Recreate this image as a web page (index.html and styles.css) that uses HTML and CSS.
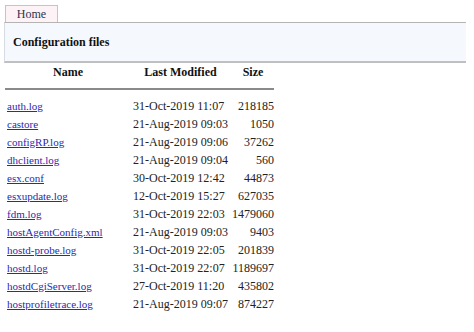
FILE: index.html
```html
<!DOCTYPE html>
<html lang="en">
<head>
  <meta charset="UTF-8" />
  <title>Configuration files</title>
  <link rel="stylesheet" href="styles.css">
</head>
<body>
  <div id="tabs">
    <span class="tab">Home</span>
  </div>
  <div id="title-box">Configuration files</div>

  <table id="listing">
    <tr>
      <th class="col-name">Name</th>
      <th class="col-date">Last Modified</th>
      <th class="col-size">Size</th>
    </tr>
    <tr><td colspan="3" class="rule-cell"><div class="rule"></div></td></tr>
    <tr><td><a href="#">auth.log</a></td><td class="date">31-Oct-2019 11:07</td><td class="size">218185</td></tr>
    <tr><td><a href="#">castore</a></td><td class="date">21-Aug-2019 09:03</td><td class="size">1050</td></tr>
    <tr><td><a href="#">configRP.log</a></td><td class="date">21-Aug-2019 09:06</td><td class="size">37262</td></tr>
    <tr><td><a href="#">dhclient.log</a></td><td class="date">21-Aug-2019 09:04</td><td class="size">560</td></tr>
    <tr><td><a href="#">esx.conf</a></td><td class="date">30-Oct-2019 12:42</td><td class="size">44873</td></tr>
    <tr><td><a href="#">esxupdate.log</a></td><td class="date">12-Oct-2019 15:27</td><td class="size">627035</td></tr>
    <tr><td><a href="#">fdm.log</a></td><td class="date">31-Oct-2019 22:03</td><td class="size">1479060</td></tr>
    <tr><td><a href="#">hostAgentConfig.xml</a></td><td class="date">21-Aug-2019 09:03</td><td class="size">9403</td></tr>
    <tr><td><a href="#">hostd-probe.log</a></td><td class="date">31-Oct-2019 22:05</td><td class="size">201839</td></tr>
    <tr><td><a href="#">hostd.log</a></td><td class="date">31-Oct-2019 22:07</td><td class="size">1189697</td></tr>
    <tr><td><a href="#">hostdCgiServer.log</a></td><td class="date">27-Oct-2019 11:20</td><td class="size">435802</td></tr>
    <tr><td><a href="#">hostprofiletrace.log</a></td><td class="date">21-Aug-2019 09:07</td><td class="size">874227</td></tr>
  </table>
</body>
</html>
```

FILE: styles.css
```css
body {
  margin: 0;
  padding: 5px 8px 0 4px;
  background-color: #fff;
  font-family: "Liberation Serif", "Times New Roman", serif;
  font-size: 12px;
  color: #222;
}

#tabs {
  display: flex;
  padding-left: 1px;
}

.tab {
  display: block;
  width: 51px;
  height: 16px;
  line-height: 16px;
  text-align: center;
  background-color: #fdf2f5;
  border: 1px solid #c4c4c4;
  border-bottom: none;
  color: #2c3550;
  font-size: 12px;
}

#title-box {
  height: 38px;
  line-height: 38px;
  padding-left: 8px;
  background-color: #f5f9fe;
  border-top: 1px solid #b4b4b4;
  border-bottom: 2px solid #c0c0c0;
  border-left: 1px solid #d8dce4;
  font-weight: bold;
  font-size: 12px;
  color: #111;
}

#listing {
  border-collapse: collapse;
  margin-top: 0;
  margin-left: 1px;
}

#listing th {
  font-weight: bold;
  height: 18px;
  padding: 0 2px;
  text-align: center;
  color: #111;
}

.col-name {
  width: 122px;
}

.col-date {
  width: 92px;
}

#listing .col-size {
  width: 42px;
  padding-right: 0;
}

#listing td {
  height: 18px;
  padding: 0 2px;
  white-space: nowrap;
}

#listing .rule-cell {
  height: 2px;
  padding: 7px 0 7px 0;
}

.rule {
  height: 2px;
  background-color: #8a8a8a;
}

#listing a {
  color: #2a2ab0;
  font-size: 11px;
}

.date {
  text-align: left;
}

#listing .size {
  text-align: right;
  padding-right: 0;
}
```
